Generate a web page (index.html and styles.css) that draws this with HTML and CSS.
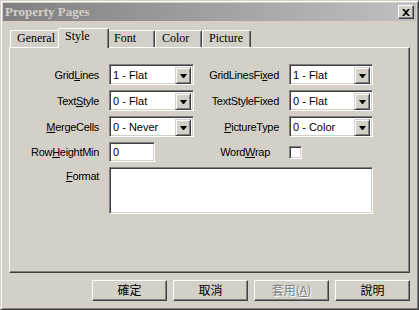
FILE: index.html
```html
<!DOCTYPE html>
<html>
<head>
    <title>Property Pages</title>
    <link rel="stylesheet" href="styles.css">
</head>
<body>
    <div class="window">
        <div class="titlebar">
            <span class="title">Property Pages</span>
            <span class="close">
                <svg width="8" height="7" viewBox="0 0 8 7"><path d="M0 0h2l2 2 2-2h2L5 3.5 8 7H6L4 5 2 7H0l3-3.5z" fill="#000"/></svg>
            </span>
        </div>

        <div class="tabs">
            <div class="tab tab-general">General</div>
            <div class="tab tab-style active">Style</div>
            <div class="tab tab-font">Font</div>
            <div class="tab tab-color">Color</div>
            <div class="tab tab-picture">Picture</div>
        </div>

        <div class="panel">
            <div class="fields">
                <label>Grid<u>L</u>ines</label>
                <div class="combo"><span class="value">1 - Flat</span><span class="drop"></span></div>
                <label>GridLinesFi<u>x</u>ed</label>
                <div class="combo"><span class="value">1 - Flat</span><span class="drop"></span></div>

                <label>Text<u>S</u>tyle</label>
                <div class="combo"><span class="value">0 - Flat</span><span class="drop"></span></div>
                <label>TextStyleFixed</label>
                <div class="combo"><span class="value">0 - Flat</span><span class="drop"></span></div>

                <label><u>M</u>ergeCells</label>
                <div class="combo"><span class="value">0 - Never</span><span class="drop"></span></div>
                <label><u>P</u>ictureType</label>
                <div class="combo"><span class="value">0 - Color</span><span class="drop"></span></div>

                <label>Row<u>H</u>eightMin</label>
                <div class="cell-left"><div class="textbox small">0</div></div>
                <label class="wrap-label">Word<u>W</u>rap</label>
                <div class="cell-left"><span class="checkbox"></span></div>

                <label class="top-label"><u>F</u>ormat</label>
                <div class="textbox format"></div>
            </div>
        </div>

        <div class="buttons">
            <div class="btn">確定</div>
            <div class="btn">取消</div>
            <div class="btn disabled">套用(<u>A</u>)</div>
            <div class="btn">說明</div>
        </div>
    </div>
</body>
</html>
```

FILE: styles.css
```css
body {
    margin: 0;
    background: #d4d0c8;
    font-family: "Liberation Sans", Arial, sans-serif;
}
.window {
    width: 419px;
    height: 310px;
    box-sizing: border-box;
    background: #d4d0c8;
    border: 1px solid;
    border-color: #d4d0c8 #404040 #404040 #d4d0c8;
    box-shadow: inset 1px 1px #fff, inset -1px -1px #808080;
    padding: 2px;
}
.titlebar {
    height: 18px;
    display: flex;
    align-items: center;
    justify-content: space-between;
    padding: 0 2px;
    background: linear-gradient(to right, #808080, #c0c0c0);
}
.title {
    font: bold 13px "Liberation Serif", serif;
    color: #d4d0c8;
}
.close {
    width: 16px;
    height: 14px;
    box-sizing: border-box;
    display: flex;
    align-items: center;
    justify-content: center;
    background: #d4d0c8;
    border: 1px solid;
    border-color: #fff #404040 #404040 #fff;
    box-shadow: inset -1px -1px #808080;
}

/* tabs */
.tabs {
    display: flex;
    align-items: flex-end;
    height: 19px;
    margin: 7px 0 0 7px;
}
.tab {
    height: 17px;
    box-sizing: border-box;
    border-top: 1px solid #fff;
    border-left: 1px solid #fff;
    border-right: 1px solid #404040;
    box-shadow: inset -1px 0 #808080;
    border-radius: 2px 2px 0 0;
    padding-left: 6px;
    font: 12px "Liberation Serif", serif;
    line-height: 15px;
    color: #000;
    background: #d4d0c8;
}
.tab-general { width: 50px; }
.tab-style { width: 51px; }
.tab-font { width: 48px; }
.tab-color { width: 47px; }
.tab-picture { width: 49px; }
.tab.active {
    height: 20px;
    margin: 0 -2px -1px -2px;
    position: relative;
    z-index: 1;
}

.panel {
    width: 401px;
    height: 226px;
    margin-left: 6px;
    box-sizing: border-box;
    border: 1px solid;
    border-color: #fff #404040 #404040 #fff;
    box-shadow: inset -1px -1px #808080;
}
.fields {
    display: grid;
    grid-template-columns: 99px 85px 95px 84px;
    grid-template-rows: 21px 21px 21px 20px 47px;
    row-gap: 5px;
    padding-top: 16px;
}
.fields label {
    align-self: center;
    text-align: right;
    padding-right: 10px;
    font-size: 11px;
    letter-spacing: -0.3px;
    color: #000;
}
.fields label.wrap-label {
    padding-right: 19px;
}
.fields label.top-label {
    align-self: start;
    padding-top: 3px;
}
.cell-left {
    display: flex;
    align-items: center;
}

/* sunken controls */
.combo, .textbox, .checkbox {
    box-sizing: border-box;
    background: #fff;
    border: 1px solid;
    border-color: #808080 #fff #fff #808080;
    box-shadow: inset 1px 1px #404040, inset -1px -1px #d4d0c8;
}
.combo {
    display: flex;
    height: 21px;
    padding: 2px;
}
.value {
    flex: 1;
    padding-left: 1px;
    font-size: 11px;
    line-height: 17px;
}
.drop {
    width: 16px;
    height: 17px;
    box-sizing: border-box;
    display: flex;
    align-items: center;
    justify-content: center;
    background: #d4d0c8;
    border: 1px solid;
    border-color: #d4d0c8 #404040 #404040 #d4d0c8;
    box-shadow: inset 1px 1px #fff, inset -1px -1px #808080;
}
.drop::after {
    content: "";
    width: 1px;
    height: 0;
    border-top: 4px solid #000;
    border-left: 3px solid transparent;
    border-right: 3px solid transparent;
}
.textbox {
    font-size: 11px;
    padding: 2px 3px;
}
.textbox.small {
    width: 46px;
    height: 20px;
    line-height: 14px;
}
.textbox.format {
    grid-column: 2 / 5;
    height: 47px;
}
.checkbox {
    width: 13px;
    height: 13px;
    margin-top: 1px;
}

/* dialog buttons */
.buttons {
    display: flex;
    justify-content: flex-end;
    gap: 6px;
    margin-top: 7px;
    padding-right: 6px;
}
.btn {
    width: 75px;
    height: 21px;
    box-sizing: border-box;
    border: 1px solid;
    border-color: #fff #404040 #404040 #fff;
    box-shadow: inset -1px -1px #808080;
    text-align: center;
    font: 12px "Noto Sans CJK TC", sans-serif;
    line-height: 18px;
    color: #000;
}
.btn.disabled {
    color: #808080;
    text-shadow: 1px 1px #fff;
}
```
